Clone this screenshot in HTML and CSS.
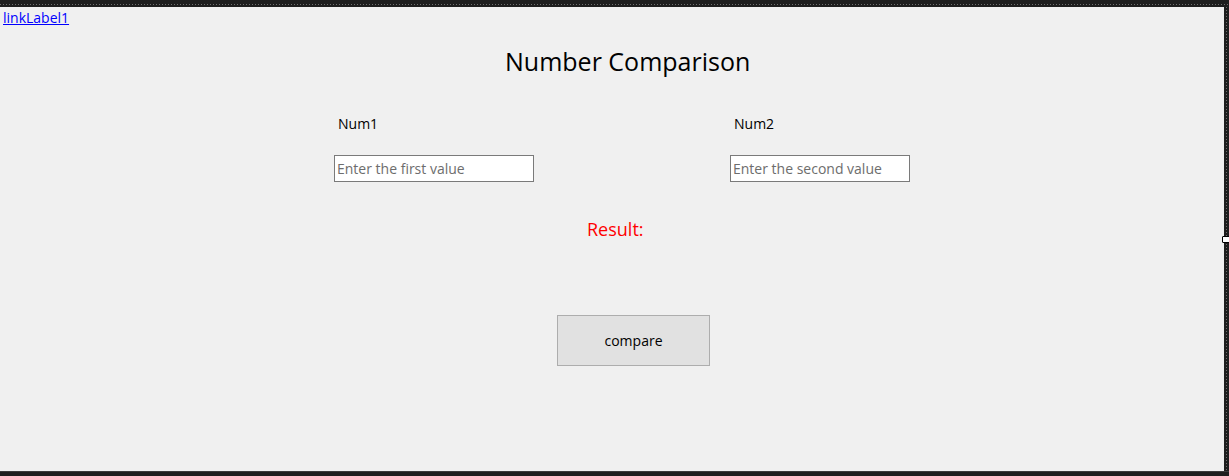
FILE: index.html
```html
<!DOCTYPE html>
<html>
<head>
<meta charset="utf-8">
<link rel="stylesheet" href="styles.css">
</head>
<body>
<div class="frame">
  <div class="top-edge"><div class="dots"></div></div>
  <div class="middle">
    <div class="form">
      <a class="link" href="#">linkLabel1</a>
      <h1 class="title">Number Comparison</h1>
      <div class="fields">
        <div class="field field-1">
          <label class="label">Num1</label>
          <input class="input input-1" type="text" placeholder="Enter the first value">
        </div>
        <div class="field field-2">
          <label class="label">Num2</label>
          <input class="input input-2" type="text" placeholder="Enter the second value">
        </div>
      </div>
      <div class="result">Result:</div>
      <div class="actions"><button class="btn">compare</button></div>
    </div>
    <div class="right-edge"><div class="vdots"></div><span class="handle"></span></div>
  </div>
  <div class="bottom-edge"></div>
</div>
</body>
</html>
```
FILE: styles.css
```css
* { box-sizing: border-box; }
html, body { margin: 0; padding: 0; }
body {
  width: 1229px;
  height: 476px;
  overflow: hidden;
  background: #1e1e1e;
  font-family: "Open Sans", "Noto Sans", sans-serif;
}
.frame {
  display: flex;
  flex-direction: column;
  width: 1229px;
  height: 476px;
}
.top-edge {
  height: 7px;
  background: #1e1e1e;
  padding-top: 4px;
}
.dots {
  height: 1px;
  background: repeating-linear-gradient(90deg, #6e6e6e 0 1px, transparent 1px 3px);
}
.middle {
  flex: 1;
  display: flex;
}
.form {
  width: 1224px;
  background: #f0f0f0;
  position: relative;
}
.right-edge {
  flex: 1;
  background: #1e1e1e;
  position: relative;
  display: flex;
  justify-content: center;
}
.vdots {
  width: 1px;
  background: repeating-linear-gradient(180deg, #6e6e6e 0 1px, transparent 1px 3px);
}
.handle {
  position: absolute;
  left: -2px;
  top: 229px;
  width: 8px;
  height: 7px;
  background: #ffffff;
  border: 1px solid #000;
  border-radius: 1px;
}
.bottom-edge {
  height: 5px;
  background: #1e1e1e;
  border-top: 1px solid #3a3a3a;
}
.link {
  display: block;
  margin: 2px 0 0 3px;
  font-size: 14px;
  line-height: 18px;
  color: #0000ff;
  text-decoration: underline;
  width: max-content;
}
.title {
  margin: 17px 0 0 505px;
  font-size: 25px;
  font-weight: 400;
  line-height: 34px;
  color: #000;
}
.fields {
  display: flex;
  margin-top: 36px;
}
.field {
  display: flex;
  flex-direction: column;
}
.field-1 { margin-left: 334px; }
.field-2 { margin-left: 196px; }
.label {
  margin-left: 4px;
  font-size: 14px;
  line-height: 20px;
  color: #000;
}
.input {
  margin-top: 21px;
  height: 27px;
  border: 1px solid #7a7a7a;
  background: #fff;
  padding: 0 2px;
  font-family: inherit;
  font-size: 14px;
  outline: none;
}
.input::placeholder { color: #6d6d6d; }
.input-1 { width: 200px; }
.input-2 { width: 180px; }
.result {
  margin: 35px 0 0 587px;
  font-size: 18px;
  line-height: 24px;
  color: #ff0000;
}
.actions {
  margin: 74px 0 0 557px;
}
.btn {
  width: 153px;
  height: 51px;
  background: #e1e1e1;
  border: 1px solid #adadad;
  font-family: inherit;
  font-size: 14px;
  color: #000;
  padding: 0;
}
```
